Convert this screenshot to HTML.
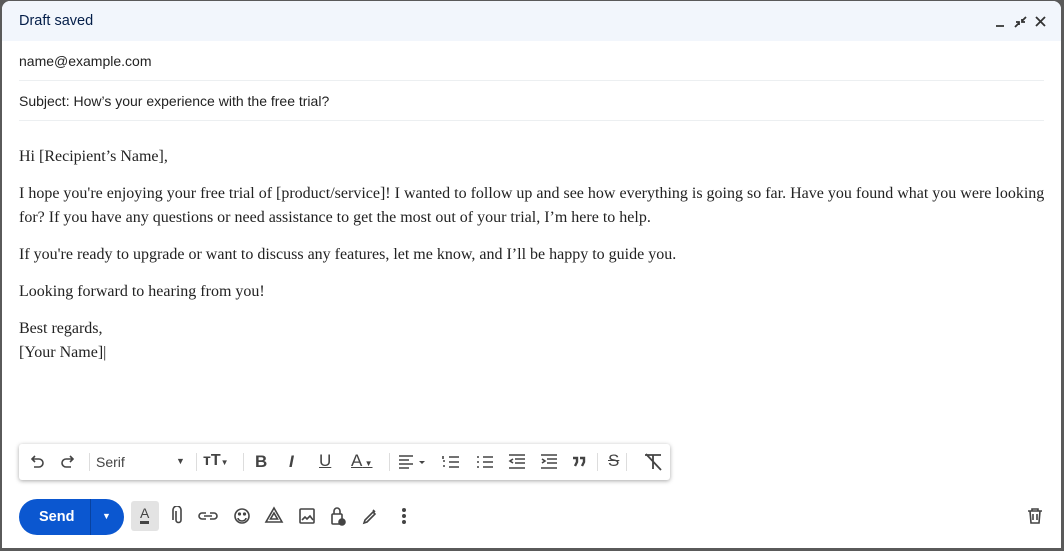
<!DOCTYPE html>
<html><head><style>
*{box-sizing:border-box;margin:0;padding:0}
body{width:1064px;height:551px;background:#5a5a5a;font-family:"Liberation Sans",sans-serif;overflow:hidden;position:relative}
.win{position:absolute;left:2px;top:1px;width:1059px;height:547px;background:#fff;border-radius:8px 8px 0 0;overflow:hidden}
.hdr{height:40px;background:#f2f6fc;padding:0 17px;display:flex;align-items:center;font-size:14.5px;color:#041e49;font-weight:500}
.row{position:absolute;left:17px;right:17px;height:40px;border-bottom:1px solid #eceff1;font-size:14px;color:#222;display:flex;align-items:center}
.body{position:absolute;left:17px;top:144px;right:14px;font-family:"Liberation Serif",serif;font-size:16px;color:#222;line-height:24px}
.body p{margin-bottom:13px}
.tb{position:absolute;left:17px;top:443px;width:651px;height:36px;background:#fff;box-shadow:0 1px 4px rgba(0,0,0,.35);border-radius:3px;font-size:14px;color:#444}
.i{position:absolute;color:#444;font-size:17px}
.send{position:absolute;left:17px;top:498px;width:105px;height:36px;background:#0b57d0;border-radius:18px;color:#fff;font-size:14.5px;font-weight:bold}
svg{position:absolute}
.sep{position:absolute;top:9px;width:1px;height:18px;background:#ddd}
</style></head><body>
<div class="win">
<div class="hdr">Draft saved</div>
<svg style="left:994px;top:14px" width="50" height="14" viewBox="0 0 50 14" stroke="#333" stroke-width="1.8" fill="none">
<line x1="0" y1="11" x2="8" y2="11"/>
<path d="M19 12l4-4M20 7h3v3M30 2l-4 4M29 7h-3v-3"/>
<path d="M40 2l9 9M49 2l-9 9"/></svg>
<div class="row" style="top:40px">name@example.com</div>
<div class="row" style="top:80px">Subject: How’s your experience with the free trial?</div>
<div class="body">
<p>Hi [Recipient’s Name],</p>
<p>I hope you're enjoying your free trial of [product/service]! I wanted to follow up and see how everything is going so far. Have you found what you were looking for? If you have any questions or need assistance to get the most out of your trial, I’m here to help.</p>
<p>If you're ready to upgrade or want to discuss any features, let me know, and I’ll be happy to guide you.</p>
<p>Looking forward to hearing from you!</p>
<p>Best regards,<br>[Your Name]|</p>
</div>
<div class="tb">
<svg style="left:10px;top:10px" width="60" height="16" viewBox="0 0 60 16" fill="none" stroke="#444" stroke-width="1.6"><path d="M3 5h7a4 4 0 010 8H5M6 2L3 5l3 3"/><path d="M44 5h-7a4 4 0 000 8h5M41 2l3 3-3 3"/></svg>
<div class="sep" style="left:70px"></div>
<span style="position:absolute;left:77px;top:10px">Serif</span><span class="i" style="left:157px;top:12px;font-size:9px">▼</span>
<div class="sep" style="left:177px"></div>
<span class="i" style="left:184px;top:8px;font-weight:bold;font-size:16px">тT<small style="font-size:8px">▼</small></span>
<div class="sep" style="left:224px"></div>
<span class="i" style="left:236px;top:8px;font-weight:bold">B</span>
<span class="i" style="left:270px;top:8px;font-style:italic;font-weight:bold">I</span>
<span class="i" style="left:300px;top:7px;text-decoration:underline">U</span>
<span class="i" style="left:332px;top:7px;text-decoration:underline">A<small style="font-size:8px;text-decoration:none"> ▼</small></span>
<div class="sep" style="left:370px"></div>
<svg style="left:378px;top:9px" width="200" height="18" viewBox="0 0 200 18" fill="none" stroke="#444" stroke-width="1.6">
<path d="M2 3h14M2 7h10M2 11h14M2 15h10"/><path d="M22 8l3 3 3-3" fill="#444" stroke="none"/>
<path d="M52 4h10M52 9h10M52 14h10M46 3v3M46 8h2M46 13h2"/>
<path d="M86 4h10M86 9h10M86 14h10M80 4h2M80 9h2M80 14h2"/>
<path d="M112 2h16M118 6h10M118 10h10M112 15h16M116 6l-3 2 3 2"/>
<path d="M144 2h16M150 6h10M150 10h10M144 15h16M145 6l3 2-3 2"/>
<path d="M176 5h4v4l-2 4M183 5h4v4l-2 4" stroke-width="2.4"/>
</svg>
<div class="sep" style="left:578px"></div>
<span class="i" style="left:589px;top:7px;text-decoration:line-through">S</span>
<div class="sep" style="left:607px"></div>
<svg style="left:624px;top:9px" width="20" height="18" viewBox="0 0 20 18" fill="none" stroke="#444" stroke-width="1.8"><path d="M2 2h16M10 2v14M3 1l15 16"/></svg>
</div>
<div class="send"><span style="position:absolute;left:20px;top:10px">Send</span><span style="position:absolute;left:71px;top:0;width:1px;height:36px;background:#0842a0"></span><span style="position:absolute;left:83px;top:12px;font-size:9px">▼</span></div>
<div style="position:absolute;left:129px;top:500px;width:28px;height:30px;background:#e3e3e3;border-radius:3px"><span style="position:absolute;left:9px;top:4px;font-size:14px;color:#444;border-bottom:3px solid #444;line-height:16px">A</span></div>
<svg style="left:165px;top:505px" width="250" height="20" viewBox="0 0 250 20" fill="none" stroke="#444" stroke-width="1.6">
<path d="M9 5v9a2.5 2.5 0 005 0V4a4 4 0 00-8 0v10"/>
<path d="M39 7h-4a3 3 0 000 6h4M43 7h4a3 3 0 010 6h-4M37 10h8"/>
<circle cx="75" cy="10" r="7"/><circle cx="72.5" cy="8" r=".8" fill="#444"/><circle cx="77.5" cy="8" r=".8" fill="#444"/><path d="M71 12a4 3 0 008 0"/>
<path d="M107 2l8 14H99zM107 7l3.5 6h-7z"/>
<rect x="133" y="3" width="14" height="14" rx="1"/><path d="M135 14l3-3 2 2 3-3 3 4"/>
<rect x="165" y="8" width="10" height="10" rx="1"/><path d="M167 8V5a3 3 0 016 0v3"/><circle cx="175" cy="16" r="3" fill="#444"/>
<path d="M197 17l3-1 8-8-2-2-8 8zM206 4l2 2"/>
<circle cx="237" cy="4" r="1.2" fill="#444"/><circle cx="237" cy="10" r="1.2" fill="#444"/><circle cx="237" cy="16" r="1.2" fill="#444"/>
</svg>
<svg style="left:1025px;top:506px" width="16" height="18" viewBox="0 0 16 18" fill="none" stroke="#444" stroke-width="1.6"><path d="M1 4h14M5 4V2h6v2M3 4l1 12h8l1-12M6 7v6M10 7v6"/></svg>
</div>
</body></html>
